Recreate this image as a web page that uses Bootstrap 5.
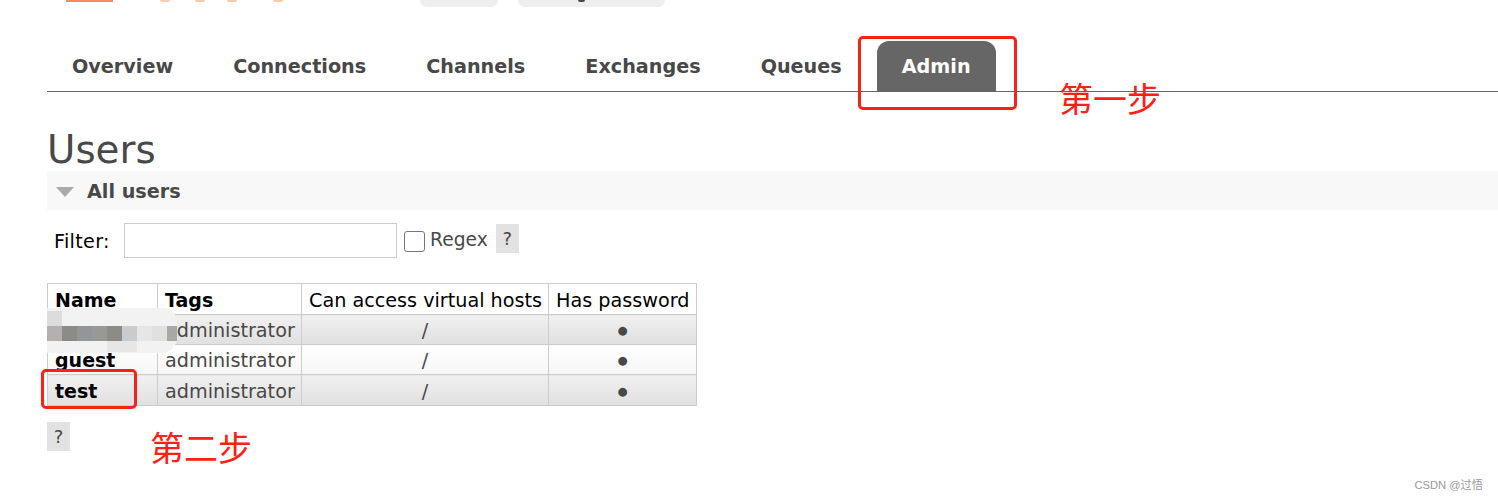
<!DOCTYPE html>
<html lang="en">
<head>
<meta charset="utf-8">
<link href="https://cdn.jsdelivr.net/npm/bootstrap@5.3.0/dist/css/bootstrap.min.css" rel="stylesheet">
<style>
html, body { height: 500px; overflow: hidden; }
body { background: #fff; font-family: "DejaVu Sans", Verdana, sans-serif; color: #484848; font-size: 19.2px; position: relative; }
.topstrip { height: 41px; padding-left: 66px; }
.logobar { width: 47px; height: 2px; background: #ff8a55; }
.logodot { width: 10px; height: 2px; background: #ffc9ae; border-radius: 0 0 5px 5px; }
.dot-a { margin-left: 47px; }
.dot-b { margin-left: 25px; }
.dot-c { margin-left: 22px; }
.dot-d { margin-left: 36px; }
.pill { height: 7px; background: #eee; border-radius: 0 0 7px 7px; }
.pill-a { width: 78px; margin-left: 137px; }
.pill-b { width: 147px; margin-left: 20px; padding-left: 60px; }
.pilltail { width: 7px; height: 2px; background: #484848; border-radius: 0 0 3px 3px; }
.menubar { margin: 0 0 0 47px; border-bottom: 1px solid #666; height: 51px; }
.menubar a { display: block; height: 50px; padding: 12px 25px 0; margin-right: 10.05px; font-size: 19.2px; font-weight: 700; color: #484848; text-decoration: none; white-space: nowrap; }
.menubar a.here { background: #666; color: #fff; border-radius: 12px 12px 0 0; }
h1.pagehead { margin: 36px 0 0 47px; font-size: 38.8px; font-weight: 400; color: #484848; line-height: 43px; }
.secbar { margin: 0 0 0 47px; height: 39px; background: #f8f8f8; padding-left: 9px; }
.secbar .tri { width: 0; height: 0; border-left: 9px solid transparent; border-right: 9px solid transparent; border-top: 10px solid #aaa; margin-right: 13px; margin-top: 2px; }
.secbar b { font-size: 19.2px; font-weight: 700; color: #484848; padding-top: 3px; }
.filterrow { margin: 13px 0 0 54px; height: 35px; }
.filterrow label { width: 70px; font-size: 19.2px; color: #000; letter-spacing: .3px; margin: 0; padding-top: 4px; }
.filterrow .ipt { width: 273px; height: 35px; border: 1px solid #ccc; background: #fff; margin-right: 7px; }
.filterrow .chk { width: 21px; height: 21px; border: 1px solid #767676; border-radius: 3px; margin: 2px 5px 0 0; background: #fff; }
.filterrow .rgx { font-size: 18.7px; margin-right: 8px; line-height: 33px; align-self: flex-start; }
.filterrow .help { align-self: flex-start; margin-top: 1px; }
.help { display: inline-block; width: 23px; height: 29px; line-height: 29px; background: #e2e2e2; color: #484848; text-align: center; font-size: 18px; }
table.usertab { margin: 25px 0 0 47px; border-collapse: collapse; font-size: 19.2px; table-layout: fixed; width: 649px; }
table.usertab th, table.usertab td { border: 1px solid #ccc; padding: 2px 7px 0; white-space: nowrap; height: 30px; line-height: 27px; }
table.usertab th { font-weight: 400; color: #000; height: 31px; line-height: 27px; }
table.usertab th.nb { font-weight: 700; font-size: 19px; }
table.usertab th.namecol { width: 110px; }
table.usertab th.tagcol { width: 144px; }
table.usertab th.hostcol { width: 247px; }
table.usertab th.pwcol { width: 148px; }
table.usertab tr.tall td { height: 31px; }
table.usertab td.nm { font-weight: 700; color: #000; font-size: 19px; }
table.usertab td.ctr { text-align: center; }
table.usertab td.bul { text-align: center; font-size: 11.5px; }
table.usertab tr.odd td { background: linear-gradient(#f0f0f0, #e0e0e0); }
table.usertab tr.even td { background: linear-gradient(#fff, #f6f6f6); }
.helpwrap { margin: 16px 0 0 47px; line-height: 0; }
.blurbg { position: absolute; left: 47px; top: 308px; width: 130px; height: 45px; background: #f2f2f2; border-radius: 0 14px 16px 0; }
.blurtop { position: absolute; left: 47px; top: 311px; width: 15px; height: 15px; background: #dcdcdc; }
.blurlow { position: absolute; left: 107px; top: 341px; width: 30px; height: 11px; background: #e6e6e6; }
.mosaic { position: absolute; left: 47px; top: 326px; display: flex; }
.mosaic i { display: block; width: 15px; height: 15px; }
.mosaic i.m1 { background: #b5b0b0; } .mosaic i.m2 { background: #8d8b87; } .mosaic i.m3 { background: #939699; }
.mosaic i.m4 { background: #979997; } .mosaic i.m5 { background: #8c8b84; } .mosaic i.m6 { background: #c8cccf; }
.mosaic i.m7 { background: #e6e6e6; } .mosaic i.m8 { background: #e2e0dc; } .mosaic i.m9 { background: #a8a8a6; width: 10px; }
.redbox { position: absolute; border: 3.5px solid #fe2015; border-radius: 5px; }
.rb-one { left: 858px; top: 36px; width: 159px; height: 74px; }
.rb-two { left: 41px; top: 369px; width: 96px; height: 40px; }
.note { position: absolute; color: #fe2015; font-family: "Noto Sans CJK SC", sans-serif; font-size: 34px; font-weight: 400; line-height: 40px; }
.nt-one { left: 1059px; top: 78px; }
.nt-two { left: 150px; top: 427px; }
.mark-csdn { position: absolute; right: 15px; top: 477px; font-size: 11.2px; color: #999; font-family: "Liberation Sans", "Noto Sans CJK SC", sans-serif; }
</style>
</head>
<body>
<div class="topstrip d-flex align-items-start">
  <div class="logobar"></div>
  <div class="logodot dot-a"></div><div class="logodot dot-b"></div><div class="logodot dot-c"></div><div class="logodot dot-d"></div>
  <div class="pill pill-a"></div><div class="pill pill-b"><div class="pilltail"></div></div>
</div>
<nav class="menubar d-flex align-items-start">
  <a href="#">Overview</a><a href="#">Connections</a><a href="#">Channels</a><a href="#">Exchanges</a><a href="#">Queues</a><a href="#" class="here">Admin</a>
</nav>
<h1 class="pagehead">Users</h1>
<div class="secbar d-flex align-items-center"><span class="tri"></span><b>All users</b></div>
<div class="filterrow d-flex align-items-center">
  <label>Filter:</label><div class="ipt"></div><div class="chk"></div><span class="rgx">Regex</span><span class="help">?</span>
</div>
<table class="usertab">
  <tr><th class="nb namecol">Name</th><th class="nb tagcol">Tags</th><th class="hostcol">Can access virtual hosts</th><th class="pwcol">Has password</th></tr>
  <tr class="odd"><td class="nm">&nbsp;</td><td>administrator</td><td class="ctr">/</td><td class="bul">●</td></tr>
  <tr class="even"><td class="nm">guest</td><td>administrator</td><td class="ctr">/</td><td class="bul">●</td></tr>
  <tr class="odd tall"><td class="nm">test</td><td>administrator</td><td class="ctr">/</td><td class="bul">●</td></tr>
</table>
<div class="helpwrap"><span class="help">?</span></div>

<div class="blurbg"></div><div class="blurtop"></div><div class="blurlow"></div>
<div class="mosaic"><i class="m1"></i><i class="m2"></i><i class="m3"></i><i class="m4"></i><i class="m5"></i><i class="m6"></i><i class="m7"></i><i class="m8"></i><i class="m9"></i></div>
<div class="redbox rb-one"></div>
<div class="redbox rb-two"></div>
<div class="note nt-one">第一步</div>
<div class="note nt-two">第二步</div>
<div class="mark-csdn">CSDN @过悟</div>
</body>
</html>
